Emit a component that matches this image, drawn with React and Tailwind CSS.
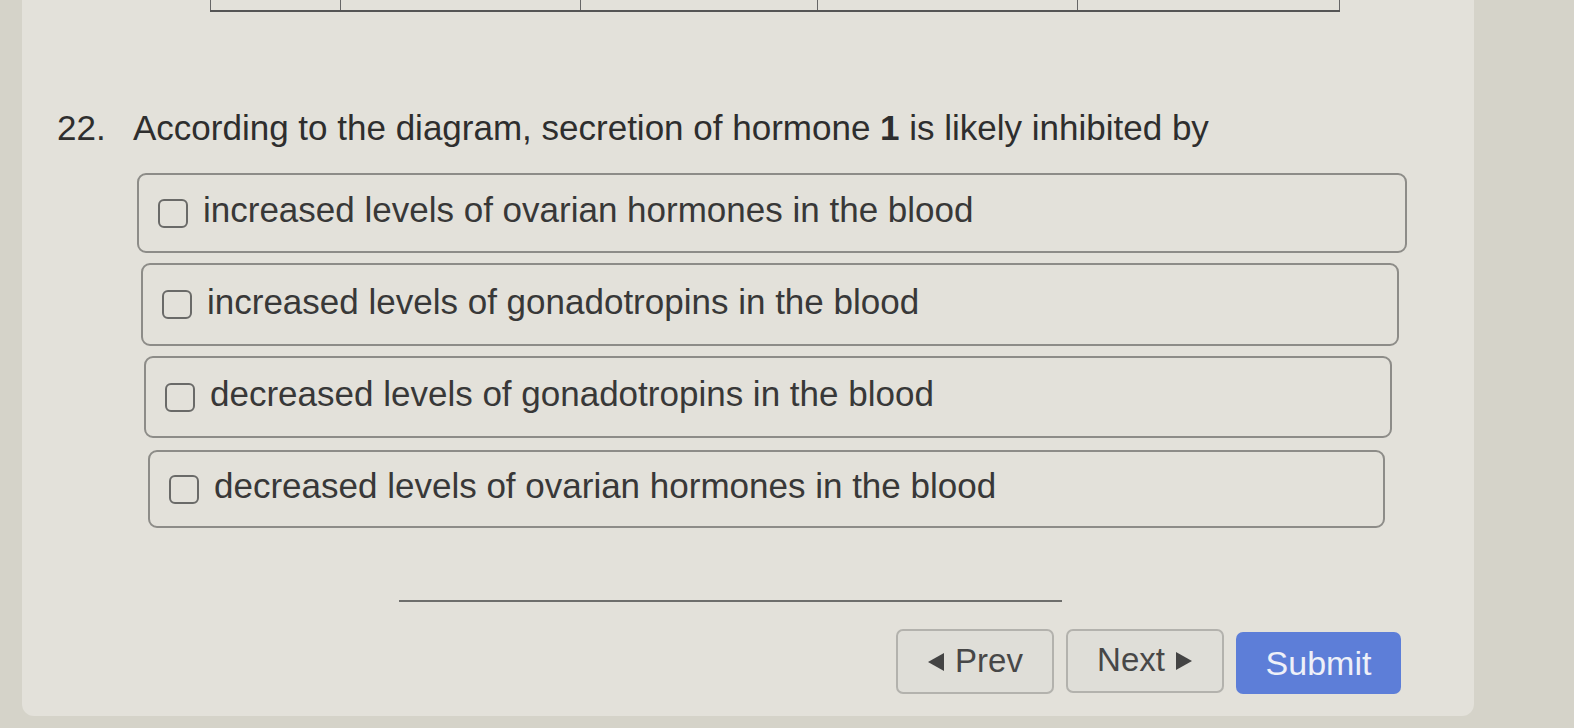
import React from "react";

const options = [
  { text: "increased levels of ovarian hormones in the blood", cls: "ml-[115px] w-[1270px] h-[80px] mt-[23px]" },
  { text: "increased levels of gonadotropins in the blood", cls: "ml-[119px] w-[1258px] h-[83px] mt-[10px]" },
  { text: "decreased levels of gonadotropins in the blood", cls: "ml-[122px] w-[1248px] h-[82px] mt-[10px]" },
  { text: "decreased levels of ovarian hormones in the blood", cls: "ml-[126px] w-[1237px] h-[78px] mt-[12px]" },
];

function Tri({ dir }) {
  return (
    <svg width="18" height="20" viewBox="0 0 18 20" className="shrink-0">
      {dir === "left" ? (
        <polygon points="17,1 17,19 1,10" fill="#444" />
      ) : (
        <polygon points="1,1 1,19 17,10" fill="#444" />
      )}
    </svg>
  );
}

export default function App() {
  return (
    <div
      className="w-full h-[728px] bg-[#d5d3c9] flex overflow-hidden"
      style={{ fontFamily: '"Liberation Sans", Arial, sans-serif' }}
    >
      <div className="ml-[22px] w-[1452px] h-[716px] bg-[#e3e1da] rounded-b-[12px] flex flex-col">
        {/* top table remnant */}
        <div className="ml-[188px] w-[1130px] h-[12px] grid grid-cols-[130px_240px_237px_260px_263px] border-b-2 border-[#555]">
          <div className="border-l border-[#666]" />
          <div className="border-l border-[#666]" />
          <div className="border-l border-[#666]" />
          <div className="border-l border-[#666]" />
          <div className="border-l border-r border-[#666]" />
        </div>

        {/* question */}
        <div className="mt-[94px] ml-[35px] flex text-[35px] leading-[44px] text-[#2e2e2e]">
          <span className="w-[76px]">22.</span>
          <span>
            According to the diagram, secretion of hormone <b>1</b> is likely inhibited by
          </span>
        </div>

        {/* options */}
        {options.map((o, i) => (
          <div
            key={i}
            className={`${o.cls} shrink-0 border-2 border-[#8d8c88] rounded-[9px] flex items-center pl-[19px] gap-[15px]`}
          >
            <div className="w-[30px] h-[29px] border-2 border-[#6a6a68] rounded-[6px] shrink-0" />
            <span className="text-[35px] leading-[40px] text-[#383838] -mt-[6px]">{o.text}</span>
          </div>
        ))}

        {/* divider */}
        <div className="mt-[72px] ml-[377px] w-[663px] h-[2px] bg-[#6e6e6c]" />

        {/* buttons */}
        <div className="mt-[27px] ml-[874px] flex items-start gap-[12px]">
          <div className="w-[158px] h-[65px] rounded-[7px] border-2 border-[#b3b2ad] bg-[#dfded8] flex items-center justify-center gap-[10px] text-[33px] text-[#474747]">
            <Tri dir="left" />
            <span className="-mt-[2px]">Prev</span>
          </div>
          <div className="w-[158px] h-[64px] rounded-[7px] border-2 border-[#b3b2ad] bg-[#dfded8] flex items-center justify-center gap-[10px] text-[33px] text-[#474747]">
            <span className="-mt-[2px]">Next</span>
            <Tri dir="right" />
          </div>
          <div className="mt-[3px] w-[165px] h-[62px] rounded-[7px] bg-[#5d7ed8] flex items-center justify-center text-[34px] text-[#eef0f8]">
            Submit
          </div>
        </div>
      </div>
    </div>
  );
}
